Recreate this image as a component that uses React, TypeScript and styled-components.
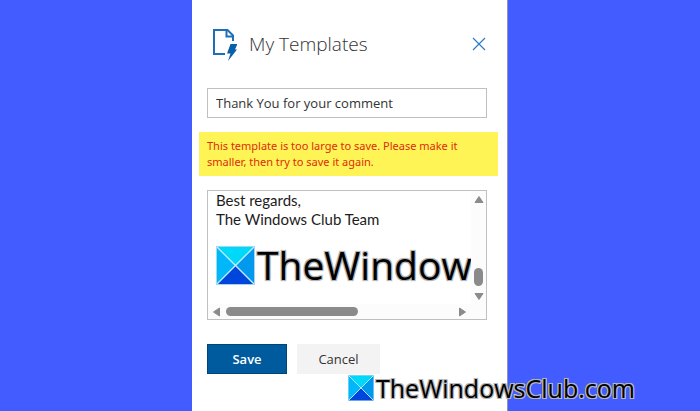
import React from "react";
import styled, { createGlobalStyle } from "styled-components";

const GlobalStyle = createGlobalStyle`
  *, *::before, *::after { box-sizing: border-box; }
  body {
    margin: 0;
    background: #435cff;
    color: #333333;
    font: 13px/20px "Open Sans", "Noto Sans", sans-serif;
  }
  button, input { font: inherit; color: inherit; }
  svg { display: block; flex: none; }
`;

const Page = styled.div`
  position: relative;
  display: flex;
  justify-content: center;
  min-height: 100vh;
  overflow: hidden;
`;

const Panel = styled.main`
  display: flex;
  flex-direction: column;
  width: 316px;
  max-width: 100%;
  padding: 26px 20px 24px 15px;
  background: #ffffff;
  border-right: 1px solid #8e93b5;
`;

const Header = styled.header`
  display: flex;
  align-items: center;
  gap: 12px;
  height: 36px;
  padding-left: 5px;
  margin-bottom: 26px;
`;

const Title = styled.h1`
  flex: 1;
  margin: 0;
  color: #333333;
  font: 300 19px/36px "Open Sans", "Noto Sans", sans-serif;
`;

const IconButton = styled.button`
  display: grid;
  place-items: center;
  width: 16px;
  height: 16px;
  padding: 0;
  border: 0;
  background: none;
  cursor: pointer;
`;

const NameInput = styled.input`
  width: 100%;
  height: 30px;
  padding: 0 8px;
  border: 1px solid #c0c0c0;
  border-radius: 0;
  background: #ffffff;
`;

const Warning = styled.p`
  margin: 14px -11px 14px -8px;
  padding: 6px 8px;
  background: #fff455;
  color: #e02b0c;
  font: 11px/16px "Noto Sans", "Open Sans", sans-serif;
`;

const Editor = styled.section`
  display: grid;
  grid-template-columns: minmax(0, 1fr) 15px;
  grid-template-rows: minmax(0, 1fr) 15px;
  height: 130px;
  border: 1px solid #c0c0c0;
`;

const EditorBody = styled.div`
  overflow: hidden;
  padding: 0 0 0 8px;
  color: #1c1c1c;
  font: 15px/19px Lato, "Open Sans", sans-serif;
  outline: none;
`;

const Line = styled.p`
  margin: 0;
`;

const Brand = styled.div<{ $large?: boolean }>`
  display: flex;
  align-items: center;
  gap: 2px;
  height: ${(p) => (p.$large ? 48 : 30)}px;
  margin-top: ${(p) => (p.$large ? 12 : 0)}px;
  white-space: nowrap;
`;

const BrandText = styled.span<{ $large?: boolean }>`
  color: #000000;
  font: 400 ${(p) => (p.$large ? "39px/48px" : "25px/30px")} "Open Sans", "Noto Sans", sans-serif;
  -webkit-text-stroke: ${(p) => (p.$large ? 3 : 2)}px ${(p) => (p.$large ? "#f0f0f0" : "#dedede")};
  paint-order: stroke fill;
  text-shadow: 1px 1px 0 #b4b4b4, -1px 1px 0 #b4b4b4, 1px -1px 0 #b4b4b4, -1px -1px 0 #b4b4b4;
`;

const ScrollBar = styled.div<{ $vertical?: boolean }>`
  display: flex;
  flex-direction: ${(p) => (p.$vertical ? "column" : "row")};
  align-items: center;
  justify-content: space-between;
  padding: ${(p) => (p.$vertical ? "4px 0 3px" : "0 4px")};
  background: #fcfcfc;
`;

const Track = styled.div<{ $vertical?: boolean }>`
  display: flex;
  flex: 1;
  flex-direction: ${(p) => (p.$vertical ? "column" : "row")};
  justify-content: ${(p) => (p.$vertical ? "flex-end" : "flex-start")};
  padding: ${(p) => (p.$vertical ? "0 0 6px" : "0 0 0 5px")};
`;

const Thumb = styled.div<{ $vertical?: boolean }>`
  width: ${(p) => (p.$vertical ? "9px" : "57%")};
  height: ${(p) => (p.$vertical ? "18px" : "9px")};
  border-radius: 5px;
  background: #8b8b8b;
`;

const ArrowButton = styled.button`
  display: grid;
  place-items: center;
  padding: 0;
  border: 0;
  background: none;
`;

const Corner = styled.div`
  background: #fcfcfc;
`;

const Actions = styled.div`
  display: flex;
  gap: 10px;
  margin-top: 24px;
`;

const Action = styled.button<{ $primary?: boolean }>`
  height: 30px;
  min-width: ${(p) => (p.$primary ? 80 : 83)}px;
  padding: 0 12px;
  border: 1px solid ${(p) => (p.$primary ? "#004578" : "#f3f3f3")};
  background: ${(p) => (p.$primary ? "#005a9e" : "#f3f3f3")};
  color: ${(p) => (p.$primary ? "#ffffff" : "#333333")};
  font-weight: ${(p) => (p.$primary ? 600 : 400)};
  cursor: pointer;
`;

const Watermark = styled.div`
  position: absolute;
  left: calc(50% - 2px);
  bottom: 8px;
`;

function TemplateIcon() {
  return (
    <svg width="25" height="34" viewBox="0 0 25 34" aria-hidden="true">
      <path d="M13 27H2V3H15.500L21 8.500V14" fill="none" stroke="#1d6fb8" strokeWidth="2" />
      <path d="M14.500 3V9.500H21" fill="none" stroke="#1d6fb8" strokeWidth="2" />
      <path d="M18.500 17H25.500L23 22.500H25L16 34L18.500 26.500H15Z" fill="#0860a8" />
    </svg>
  );
}

function CloseIcon() {
  return (
    <svg width="14" height="14" viewBox="0 0 14 14" aria-hidden="true">
      <path d="M1 1L13 13M13 1L1 13" stroke="#2b7cc4" strokeWidth="1.200" />
    </svg>
  );
}

function BrandMark({ size }: { size: number }) {
  return (
    <svg width={size} height={size} viewBox="0 0 40 40" aria-hidden="true">
      <path d="M0 0H40L20 20Z" fill="#00d8fa" />
      <path d="M0 0L20 20L0 40Z" fill="#00b7fa" />
      <path d="M40 0V40L20 20Z" fill="#0099ee" />
      <path d="M0 40L20 20L40 40Z" fill="#0046dc" />
      <path d="M0 0L40 40M40 0L0 40" stroke="#c4ecfb" strokeWidth="1.400" />
      <rect x="0.500" y="0.500" width="39" height="39" fill="none" stroke="#a8d8f0" strokeWidth="1" />
    </svg>
  );
}

const arrows = {
  up: "M5 1.500L9 7.500H1Z",
  down: "M1 1.500H9L5 7.500Z",
  left: "M1.500 5L7.500 1V9Z",
  right: "M7.500 5L1.500 1V9Z",
};

function Arrow({ to }: { to: keyof typeof arrows }) {
  const upright = to === "up" || to === "down";
  const w = upright ? 10 : 9;
  const h = upright ? 9 : 10;
  return (
    <ArrowButton type="button" aria-label={`Scroll ${to}`}>
      <svg width={w} height={h} viewBox={`0 0 ${w} ${h}`} aria-hidden="true">
        <path d={arrows[to]} fill="#8b8b8b" stroke="#8b8b8b" strokeLinejoin="round" />
      </svg>
    </ArrowButton>
  );
}

export default function App() {
  return (
    <Page>
      <GlobalStyle />
      <Panel>
        <Header>
          <TemplateIcon />
          <Title>My Templates</Title>
          <IconButton type="button" aria-label="Close">
            <CloseIcon />
          </IconButton>
        </Header>
        <NameInput aria-label="Template name" defaultValue="Thank You for your comment" />
        <Warning role="alert">
          This template is too large to save. Please make it smaller, then try to save it again.
        </Warning>
        <Editor>
          <EditorBody
            role="textbox"
            aria-label="Template body"
            aria-multiline="true"
            contentEditable
            suppressContentEditableWarning
            spellCheck={false}
          >
            <Line>Best regards,</Line>
            <Line>The Windows Club Team</Line>
            <Brand $large>
              <BrandMark size={39} />
              <BrandText $large>TheWindow</BrandText>
            </Brand>
          </EditorBody>
          <ScrollBar $vertical>
            <Arrow to="up" />
            <Track $vertical>
              <Thumb $vertical />
            </Track>
            <Arrow to="down" />
          </ScrollBar>
          <ScrollBar>
            <Arrow to="left" />
            <Track>
              <Thumb />
            </Track>
            <Arrow to="right" />
          </ScrollBar>
          <Corner />
        </Editor>
        <Actions>
          <Action type="button" $primary>
            Save
          </Action>
          <Action type="button">Cancel</Action>
        </Actions>
      </Panel>
      <Watermark>
        <Brand>
          <BrandMark size={26} />
          <BrandText>TheWindowsClub.com</BrandText>
        </Brand>
      </Watermark>
    </Page>
  );
}
